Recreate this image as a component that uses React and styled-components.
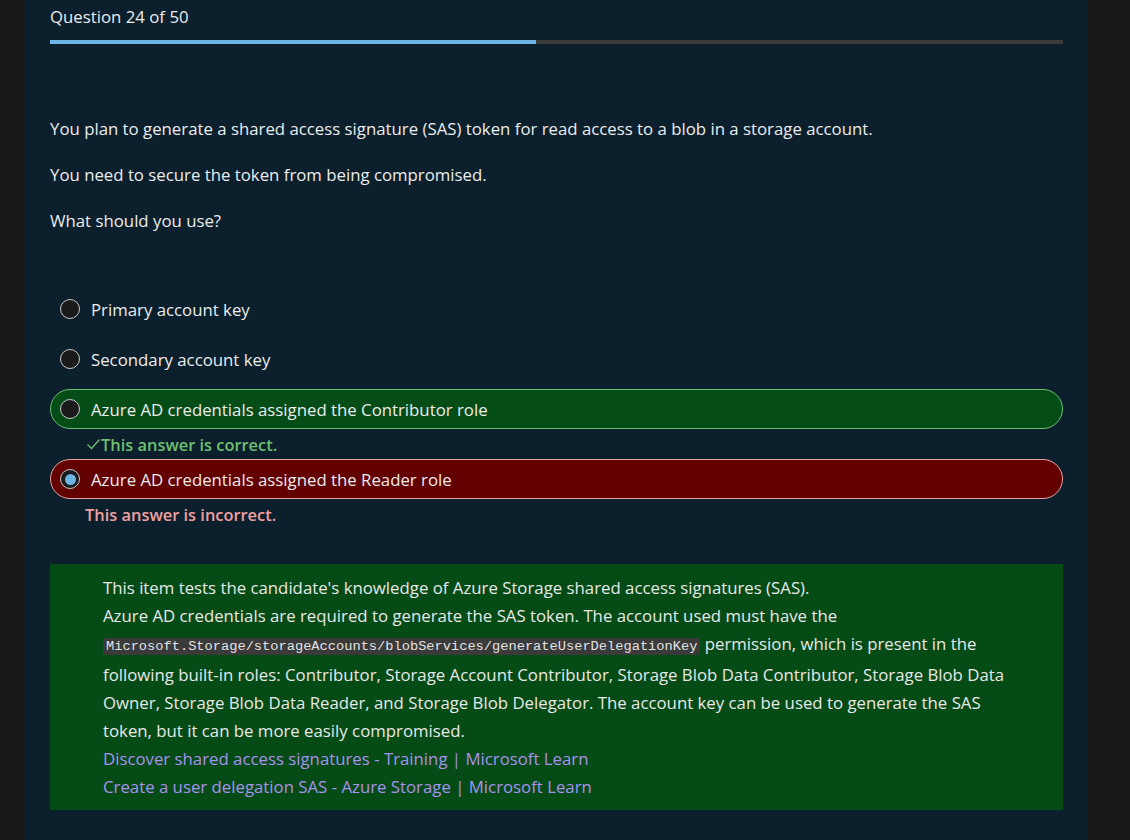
import React from 'react';
import styled, {createGlobalStyle} from 'styled-components';

const GlobalStyle = createGlobalStyle`
    body {
        margin: 0;
        background-color: #171717;
        font-family: "Open Sans", "Noto Sans", sans-serif;
        color: #ececec;
    }
`;

const Panel = styled.main`
    margin-left: 25px;
    width: 1062px;
    min-height: 840px;
    box-sizing: border-box;
    padding: 6px 24px 0 25px;
    background-color: #0b1f2d;
`;

const Counter = styled.div`
    font-size: 16.8px;
    line-height: 22px;
`;

const Track = styled.div`
    margin-top: 12px;
    height: 4px;
    background-color: #3b3b3b;
`;

const Fill = styled.div`
    height: 100%;
    background-color: #6cb4e4;
`;

const Question = styled.div`
    margin-top: 74px;
    display: flex;
    flex-direction: column;
    gap: 24px;
`;

const P = styled.p`
    margin: 0;
    font-size: 16.8px;
    line-height: 22px;
`;

const Options = styled.div`
    margin-top: 57px;
    display: flex;
    flex-direction: column;
`;

const Group = styled.div`
    padding-bottom: ${p => (p.$hasFeedback ? 5 : 10)}px;
`;

const tones = {
    none: {bg: 'transparent', border: 'transparent'},
    correct: {bg: '#054d16', border: '#6fbf6f'},
    wrong: {bg: '#630000', border: '#e8a2a2'},
};

const Pill = styled.label`
    display: flex;
    align-items: center;
    gap: 11px;
    height: 40px;
    box-sizing: border-box;
    padding-left: 9px;
    border: 1px solid ${p => tones[p.$tone].border};
    border-radius: 20px;
    background-color: ${p => tones[p.$tone].bg};
    font-size: 16.8px;
`;

const Radio = styled.span`
    width: 20px;
    height: 20px;
    box-sizing: border-box;
    border-radius: 50%;
    border: 1.5px solid #c9c9c9;
    background-color: #1b1b1b;
    display: flex;
    align-items: center;
    justify-content: center;
    flex-shrink: 0;
`;

const Dot = styled.span`
    width: 11px;
    height: 11px;
    border-radius: 50%;
    background-color: #6cb4e4;
`;

const Feedback = styled.div`
    margin-top: 5px;
    height: 20px;
    display: flex;
    align-items: center;
    padding-left: ${p => (p.$ok ? 36 : 35)}px;
    font-size: 16.4px;
    font-weight: 600;
    color: ${p => (p.$ok ? '#6fbf6f' : '#f0a0a0')};
`;

const Explanation = styled.section`
    margin-top: 35px;
    background-color: #054b15;
    padding: 9.5px 40px 9.5px 53px;
    font-size: 16.8px;
    line-height: 28px;
    color: #e8e8e8;
`;

const Line = styled.div``;

const Code = styled.code`
    font-family: "Liberation Mono", "DejaVu Sans Mono", monospace;
    font-size: 13.7px;
    background-color: #3a3a3a;
    color: #e2e2e2;
    border-radius: 3px;
    padding: 1px 3px;
`;

const A = styled.a`
    display: block;
    color: #a892ee;
    text-decoration: none;
`;

const options = [
    {text: 'Primary account key', tone: 'none'},
    {text: 'Secondary account key', tone: 'none'},
    {text: 'Azure AD credentials assigned the Contributor role', tone: 'correct', feedback: 'This answer is correct.'},
    {text: 'Azure AD credentials assigned the Reader role', tone: 'wrong', selected: true, feedback: 'This answer is incorrect.'},
];

function Check() {
    return (
        <svg width="15" height="14" viewBox="0 0 15 14" fill="none">
            <path d="M1.5 7.5 L5.5 11.5 L13.5 2.5" stroke="#6fbf6f" strokeWidth="1.4" />
        </svg>
    );
}

function App() {
    return (
        <>
            <GlobalStyle />
            <Panel>
                <Counter>Question 24 of 50</Counter>
                <Track>
                    <Fill style={{width: `${(24 / 50) * 100}%`}} />
                </Track>

                <Question>
                    <P>You plan to generate a shared access signature (SAS) token for read access to a blob in a storage account.</P>
                    <P>You need to secure the token from being compromised.</P>
                    <P>What should you use?</P>
                </Question>

                <Options>
                    {options.map(o => (
                        <Group key={o.text} $hasFeedback={!!o.feedback}>
                            <Pill $tone={o.tone}>
                                <Radio>{o.selected ? <Dot /> : null}</Radio>
                                {o.text}
                            </Pill>
                            {o.feedback ? (
                                <Feedback $ok={o.tone === 'correct'}>
                                    {o.tone === 'correct' ? <Check /> : null}
                                    {o.feedback}
                                </Feedback>
                            ) : null}
                        </Group>
                    ))}
                </Options>

                <Explanation>
                    <Line>This item tests the candidate's knowledge of Azure Storage shared access signatures (SAS).</Line>
                    <Line>
                        Azure AD credentials are required to generate the SAS token. The account used must have the{' '}
                        <Code>Microsoft.Storage/storageAccounts/blobServices/generateUserDelegationKey</Code> permission, which is
                        present in the following built-in roles: Contributor, Storage Account Contributor, Storage Blob Data
                        Contributor, Storage Blob Data Owner, Storage Blob Data Reader, and Storage Blob Delegator. The account key
                        can be used to generate the SAS token, but it can be more easily compromised.
                    </Line>
                    <A href="#">Discover shared access signatures - Training | Microsoft Learn</A>
                    <A href="#">Create a user delegation SAS - Azure Storage | Microsoft Learn</A>
                </Explanation>
            </Panel>
        </>
    );
}

export default App;
